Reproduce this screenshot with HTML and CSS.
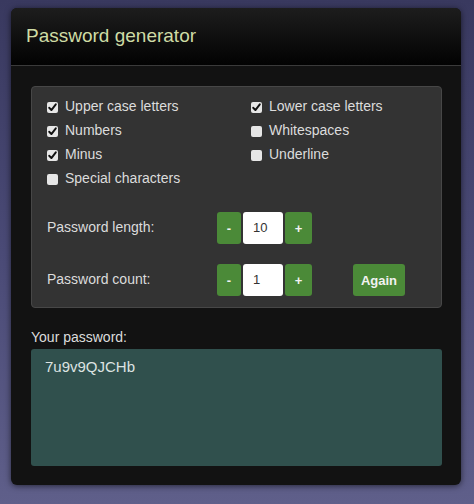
FILE: index.html
```html
<!DOCTYPE html>
<html>
<head>
<meta charset="utf-8">
<link rel="stylesheet" href="styles.css">
</head>
<body>
<div class="panel">
  <div class="header"><h1 class="title">Password generator</h1></div>
  <div class="content">
    <div class="options">
      <div class="checks">
        <label class="check"><span class="box on"><svg viewBox="0 0 12 12" width="11" height="11"><path d="M2.4 6.3 L4.8 8.8 L9.6 2.6" fill="none" stroke="#111" stroke-width="2.1" stroke-linecap="round" stroke-linejoin="round"/></svg></span>Upper case letters</label>
        <label class="check"><span class="box on"><svg viewBox="0 0 12 12" width="11" height="11"><path d="M2.4 6.3 L4.8 8.8 L9.6 2.6" fill="none" stroke="#111" stroke-width="2.1" stroke-linecap="round" stroke-linejoin="round"/></svg></span>Lower case letters</label>
        <label class="check"><span class="box on"><svg viewBox="0 0 12 12" width="11" height="11"><path d="M2.4 6.3 L4.8 8.8 L9.6 2.6" fill="none" stroke="#111" stroke-width="2.1" stroke-linecap="round" stroke-linejoin="round"/></svg></span>Numbers</label>
        <label class="check"><span class="box"></span>Whitespaces</label>
        <label class="check"><span class="box on"><svg viewBox="0 0 12 12" width="11" height="11"><path d="M2.4 6.3 L4.8 8.8 L9.6 2.6" fill="none" stroke="#111" stroke-width="2.1" stroke-linecap="round" stroke-linejoin="round"/></svg></span>Minus</label>
        <label class="check"><span class="box"></span>Underline</label>
        <label class="check"><span class="box"></span>Special characters</label>
      </div>
      <div class="field field-first">
        <span class="field-label">Password length:</span>
        <div class="spinner">
          <button class="btn minus">-</button>
          <span class="num">10</span>
          <button class="btn plus">+</button>
        </div>
      </div>
      <div class="field">
        <span class="field-label">Password count:</span>
        <div class="spinner">
          <button class="btn minus">-</button>
          <span class="num">1</span>
          <button class="btn plus">+</button>
        </div>
        <button class="btn again">Again</button>
      </div>
    </div>
    <div class="out-label">Your password:</div>
    <div class="output">7u9v9QJCHb</div>
  </div>
</div>
</body>
</html>
```

FILE: styles.css
```css
html, body {
  margin: 0;
  height: 100%;
}
body {
  background: linear-gradient(to bottom, #39395f 0%, #4a4a76 50%, #5f5f8a 100%);
  font-family: "Liberation Sans", Arial, sans-serif;
  padding: 8px 13px 0 11px;
  box-sizing: border-box;
}
.panel {
  width: 450px;
  height: 477px;
  background: #121212;
  border-radius: 6px;
  box-shadow: 0 1px 6px rgba(0,0,0,0.6);
  overflow: hidden;
}
.header {
  height: 57px;
  background: linear-gradient(to bottom, #1d1d1d, #020202);
  border-bottom: 1px solid #3a3a3a;
  display: flex;
  align-items: center;
  padding-left: 15px;
}
.title {
  margin: 0;
  font-weight: normal;
  font-size: 19px;
  color: #cfdca5;
  padding-bottom: 2px;
}
.content {
  padding: 20px 19px 19px 20px;
}
.options {
  background: #333333;
  border: 1px solid #474747;
  border-radius: 4px;
  padding: 7px 15px 11px 15px;
}
.checks {
  display: grid;
  grid-template-columns: 204px 1fr;
}
.check {
  height: 24px;
  display: flex;
  align-items: center;
  font-size: 14px;
  color: #dcdcdc;
  gap: 7px;
}
.box {
  width: 11px;
  height: 11px;
  border-radius: 2px;
  background: #e6e6e6;
  display: flex;
  align-items: center;
  justify-content: center;
  margin-top: 3px;
}
.field {
  display: flex;
  align-items: center;
  margin-top: 20px;
}
.field-first {
  margin-top: 22px;
}
.field-label {
  width: 170px;
  font-size: 14px;
  color: #dcdcdc;
  margin-top: -3px;
}
.spinner {
  display: flex;
  gap: 2px;
}
.btn {
  border: none;
  background: #4b8a38;
  color: #f2f2f2;
  font-family: "Liberation Sans", Arial, sans-serif;
  font-weight: bold;
  border-radius: 3px;
  padding: 0;
  height: 32px;
  font-size: 13px;
}
.btn.minus {
  width: 24px;
}
.btn.plus {
  width: 27px;
}
.num {
  width: 40px;
  height: 32px;
  background: #ffffff;
  border-radius: 3px;
  color: #333;
  font-size: 13px;
  line-height: 32px;
  padding-left: 10px;
  box-sizing: border-box;
}
.btn.again {
  width: 52px;
  margin-left: 41px;
}
.out-label {
  margin-top: 19px;
  font-size: 14px;
  line-height: 20px;
  color: #dcdcdc;
}
.output {
  margin-top: 2px;
  height: 117px;
  box-sizing: border-box;
  background: #30504d;
  border-radius: 3px;
  padding: 10px 14px;
  font-size: 15px;
  color: #dde3e2;
  line-height: 16px;
}
```
